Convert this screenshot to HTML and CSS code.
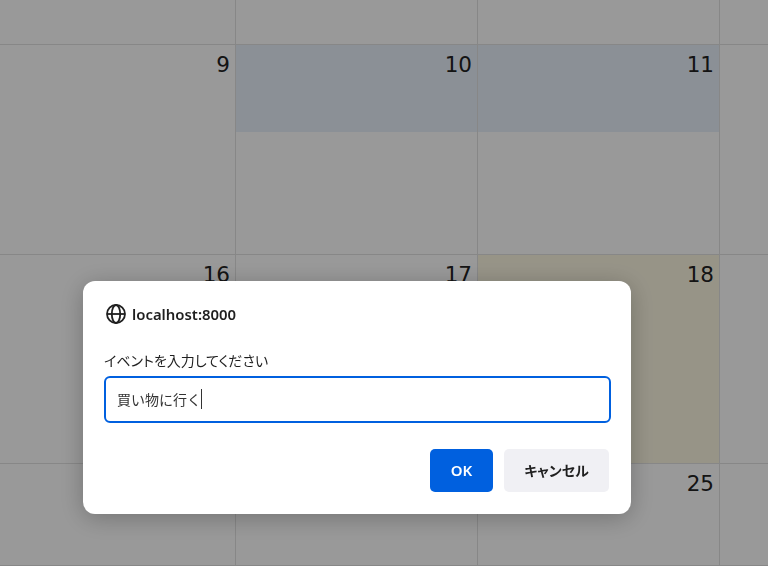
FILE: index.html
```html
<!DOCTYPE html>
<html lang="ja">
<head>
    <meta charset="UTF-8">
    <meta name="viewport" content="width=device-width, initial-scale=1.0">
    <title>カレンダー</title>
    <link rel="stylesheet" href="styles.css">
</head>
<body>
    <div class="calendar">
        <div class="day"></div><div class="day"></div><div class="day"></div><div class="day last"></div>
        <div class="day">9</div>
        <div class="day event-blue">10</div>
        <div class="day event-blue">11</div>
        <div class="day last"></div>
        <div class="day">16</div>
        <div class="day">17</div>
        <div class="day event-yellow">18</div>
        <div class="day last"></div>
        <div class="day"></div>
        <div class="day"></div>
        <div class="day">25</div>
        <div class="day last"></div>
    </div>

    <div class="overlay"></div>

    <div class="dialog">
        <div class="origin">
            <svg class="globe" width="20" height="20" viewBox="0 0 20 20" fill="none" stroke="#1f1f1f" stroke-width="1.8">
                <circle cx="10" cy="10" r="9"/>
                <ellipse cx="10" cy="10" rx="4.2" ry="9"/>
                <path d="M1 10h18"/>
            </svg>
            <span>localhost:8000</span>
        </div>
        <label class="prompt" for="eventName">イベントを入力してください</label>
        <div class="field" id="eventName">買い物に行く<span class="caret"></span></div>
        <div class="buttons">
            <button class="btn btn-ok">OK</button>
            <button class="btn btn-cancel">キャンセル</button>
        </div>
    </div>
</body>
</html>
```

FILE: styles.css
```css
html, body {
    margin: 0;
    height: 100%;
    overflow: hidden;
}
body {
    background-color: #fff;
    font-family: "Noto Sans", "Noto Sans CJK JP", sans-serif;
}

/* calendar behind the dialog */
.calendar {
    display: grid;
    grid-template-columns: 236px 242px 242px 48px;
    grid-template-rows: 45px 210px 209px 102px;
    font-family: "DejaVu Sans", sans-serif;
    font-size: 21.5px;
    color: #222;
}
.day {
    box-sizing: border-box;
    padding: 6px 5px 0 0;
    text-align: right;
    line-height: 28px;
    border-right: 1px solid #e2e2e2;
    border-bottom: 1px solid #e2e2e2;
}
.day.last {
    border-right: none;
}
.event-blue {
    background: linear-gradient(#e8f0fa, #e8f0fa) no-repeat;
    background-size: 100% 87px;
}
.event-yellow {
    background-color: #fcf7e2;
}

.overlay {
    position: fixed;
    inset: 0;
    background-color: rgba(0, 0, 0, 0.4);
}

/* prompt dialog */
.dialog {
    position: fixed;
    left: 83px;
    top: 281px;
    width: 548px;
    height: 233px;
    box-sizing: border-box;
    padding: 21px 20px 0 21px;
    background-color: #fff;
    border-radius: 12px;
    box-shadow: 0 4px 24px rgba(0, 0, 0, 0.25);
    color: #1f1f1f;
}
.origin {
    display: flex;
    align-items: center;
    gap: 6px;
    height: 24px;
    padding-left: 2px;
    font-size: 14.9px;
    font-weight: 600;
}
.prompt {
    display: block;
    margin-top: 25px;
    font-size: 14px;
    line-height: 20px;
    font-feature-settings: "palt";
}
.field {
    box-sizing: border-box;
    display: flex;
    align-items: center;
    height: 47px;
    margin-top: 5px;
    padding: 0 0 1px 11px;
    border: 2px solid #0060df;
    border-radius: 6px;
    font-size: 14px;
    color: #333;
}
.caret {
    width: 1px;
    height: 20px;
    background-color: #333;
}
.buttons {
    display: flex;
    justify-content: flex-end;
    gap: 11px;
    margin-top: 26px;
    padding-right: 2px;
}
.btn {
    height: 43px;
    padding: 0 0 2px;
    border: none;
    border-radius: 5px;
    font-family: inherit;
    font-size: 14px;
    font-weight: 600;
    font-feature-settings: "palt";
}
.btn-ok {
    width: 63px;
    background-color: #0060df;
    color: #fff;
    font-size: 15px;
}
.btn-cancel {
    width: 105px;
    background-color: #f0f0f4;
    color: #1f1f1f;
}
```
